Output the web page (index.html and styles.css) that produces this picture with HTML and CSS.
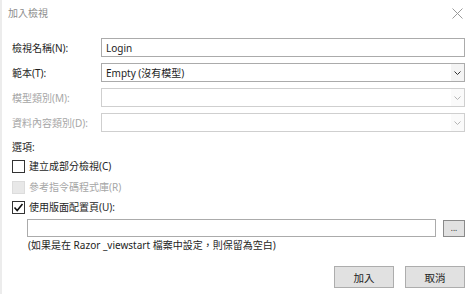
FILE: index.html
```html
<!doctype html>
<html lang="zh-Hant">
  <head>
    <meta charset="UTF-8">
    <meta name="viewport" content="width=device-width, initial-scale=1.0">
    <title>加入檢視</title>
    <link rel="stylesheet" href="styles.css">
  </head>
  <body>
    <div class="dialog">
      <div class="titlebar">
        <span class="title">加入檢視</span>
        <span class="close">
          <svg width="11" height="11" viewBox="0 0 11 11"><path d="M0.5 0.5 L10.5 10.5 M10.5 0.5 L0.5 10.5" stroke="#9a9a9a" stroke-width="1" fill="none"/></svg>
        </span>
      </div>

      <div class="form">
        <div class="row">
          <label class="label">檢視名稱(N):</label>
          <div class="field"><span class="value">Login</span></div>
        </div>
        <div class="row">
          <label class="label">範本(T):</label>
          <div class="field combo">
            <span class="value">Empty (沒有模型)</span>
            <span class="arrow"><svg width="7" height="4" viewBox="0 0 7 4"><path d="M0.5 0.5 L3.5 3.5 L6.5 0.5" stroke="#333" fill="none"/></svg></span>
          </div>
        </div>
        <div class="row disabled">
          <label class="label">模型類別(M):</label>
          <div class="field combo">
            <span class="value"></span>
            <span class="arrow"><svg width="7" height="4" viewBox="0 0 7 4"><path d="M0.5 0.5 L3.5 3.5 L6.5 0.5" stroke="#b5b5b5" fill="none"/></svg></span>
          </div>
        </div>
        <div class="row disabled">
          <label class="label">資料內容類別(D):</label>
          <div class="field combo">
            <span class="value"></span>
            <span class="arrow"><svg width="7" height="4" viewBox="0 0 7 4"><path d="M0.5 0.5 L3.5 3.5 L6.5 0.5" stroke="#b5b5b5" fill="none"/></svg></span>
          </div>
        </div>

        <div class="section">選項:</div>

        <div class="check first">
          <span class="box"></span>
          <span>建立成部分檢視(C)</span>
        </div>
        <div class="check disabled">
          <span class="box"></span>
          <span>參考指令碼程式庫(R)</span>
        </div>
        <div class="check">
          <span class="box checked">
            <svg width="11" height="11" viewBox="0 0 11 11"><path d="M1.5 5.5 L4.2 8.5 L9.5 2" stroke="#111" stroke-width="1.6" fill="none"/></svg>
          </span>
          <span>使用版面配置頁(U):</span>
        </div>

        <div class="layout-row">
          <div class="field wide"></div>
          <button class="btn browse">...</button>
        </div>
        <div class="hint">(如果是在 Razor _viewstart 檔案中設定，則保留為空白)</div>

        <div class="actions">
          <button class="btn">加入</button>
          <button class="btn">取消</button>
        </div>
      </div>
    </div>
  </body>
</html>
```

FILE: styles.css
```css
html, body {
  margin: 0;
  padding: 0;
  background: #ffffff;
}

body {
  font-family: "Noto Sans", "Noto Sans CJK TC", sans-serif;
  font-size: 10px;
  color: #1e1e1e;
}

.dialog {
  width: 474px;
  height: 294px;
  box-sizing: border-box;
  border-left: 2px solid #ececec;
  overflow: hidden;
}

.titlebar {
  height: 28px;
  display: flex;
  align-items: center;
  justify-content: space-between;
  padding: 0 11px 3px 6px;
  box-sizing: border-box;
}

.title {
  color: #8c8c8c;
  font-size: 10px;
}

.close {
  display: flex;
  margin-top: 2px;
}

.form {
  padding: 10px 9px 0 10px;
}

.row {
  display: flex;
  align-items: center;
  height: 19px;
  margin-bottom: 6px;
}

.label {
  width: 89px;
  flex: none;
  white-space: nowrap;
}

.field {
  flex: 1;
  height: 19px;
  box-sizing: border-box;
  border: 1px solid #ababab;
  background: #fff;
  display: flex;
  align-items: center;
  padding-left: 4px;
}

.combo .value {
  flex: 1;
}

.arrow {
  width: 13px;
  height: 17px;
  display: flex;
  align-items: center;
  justify-content: center;
  background: #f4f4f4;
}

.disabled {
  color: #a6a6a6;
}

.disabled .field {
  border-color: #cfcfcf;
}

.disabled .arrow {
  background: #fafafa;
}

.section {
  margin-top: 1px;
  height: 18px;
  line-height: 18px;
}

.check {
  display: flex;
  align-items: center;
  height: 13px;
  line-height: 13px;
  margin-top: 7px;
  gap: 4px;
}

.check.first {
  margin-top: 4px;
}

.check.disabled {
  margin-top: 8px;
}

.box {
  width: 13px;
  height: 13px;
  flex: none;
  box-sizing: border-box;
  border: 1px solid #333;
  background: #fff;
  display: flex;
  align-items: center;
  justify-content: center;
}

.check.disabled .box {
  border-color: #dcdcdc;
  background: #e8e8e8;
}

.layout-row {
  display: flex;
  align-items: center;
  height: 18px;
  margin-top: 5px;
  padding-left: 15px;
  gap: 7px;
}

.wide {
  height: 18px;
}

.btn {
  font-family: "Noto Sans", "Noto Sans CJK TC", sans-serif;
  font-size: 10.5px;
  color: #1e1e1e;
  background: #e1e1e1;
  border: 1px solid #adadad;
  padding: 0;
  margin: 0;
}

.browse {
  width: 22px;
  height: 17px;
  border-color: #8a8a8a;
  font-size: 8px;
  line-height: 10px;
}

.hint {
  padding-left: 16px;
  height: 16px;
  line-height: 16px;
  white-space: nowrap;
}

.actions {
  display: flex;
  justify-content: flex-end;
  gap: 11px;
  margin-top: 13px;
}

.actions .btn {
  width: 60px;
  height: 22px;
}
```
